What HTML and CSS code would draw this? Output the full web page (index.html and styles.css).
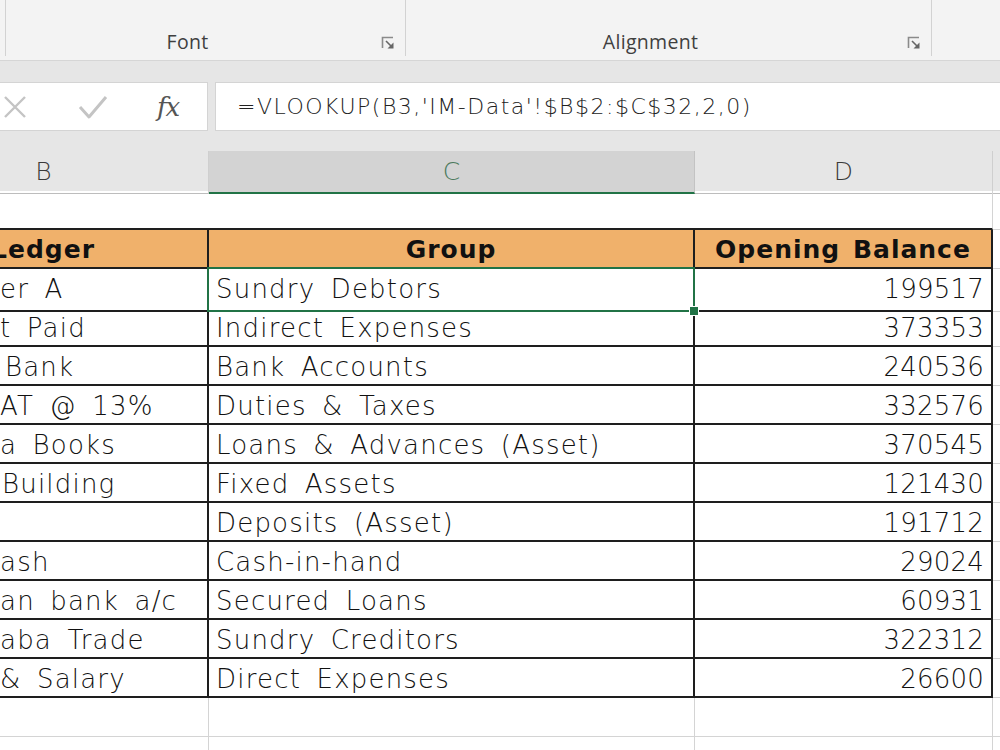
FILE: index.html
```html
<!DOCTYPE html>
<html>
<head>
<meta charset="utf-8">
<link rel="stylesheet" href="styles.css">
</head>
<body>
<div class="app">
  <div class="ribbon">
    <div class="grp grp-stub"></div>
    <div class="grp grp-font">
      <span class="grp-label">Font</span>
      <svg class="launcher" width="14" height="14" viewBox="0 0 14 14"><path d="M1.5 12V1.5H12" fill="none" stroke="#8a8a8a" stroke-width="1.6"/><path d="M5 5l5.5 5.5" stroke="#666" stroke-width="1.6"/><path d="M6.5 12.5h6v-6z" fill="#666"/></svg>
    </div>
    <div class="grp grp-align">
      <span class="grp-label">Alignment</span>
      <svg class="launcher" width="14" height="14" viewBox="0 0 14 14"><path d="M1.5 12V1.5H12" fill="none" stroke="#8a8a8a" stroke-width="1.6"/><path d="M5 5l5.5 5.5" stroke="#666" stroke-width="1.6"/><path d="M6.5 12.5h6v-6z" fill="#666"/></svg>
    </div>
    <div class="grp grp-rest"></div>
  </div>

  <div class="fbar">
    <div class="fbar-icons">
      <svg class="ic-x" width="26" height="26" viewBox="0 0 26 26"><path d="M3 3l20 20M23 3L3 23" stroke="#c4c4c4" stroke-width="2.4" fill="none"/></svg>
      <svg class="ic-check" width="30" height="26" viewBox="0 0 30 26"><path d="M2 13l9 10L28 3" stroke="#c4c4c4" stroke-width="3" fill="none" stroke-linejoin="round"/></svg>
      <span class="ic-fx">fx</span>
    </div>
    <div class="fbar-input">=VLOOKUP(B3,'IM-Data'!$B$2:$C$32,2,0)</div>
  </div>

  <div class="sheet">
    <div class="row colheads">
      <div class="ch">B</div>
      <div class="ch ch-sel">C</div>
      <div class="ch">D</div>
      <div class="ch ch-e"></div>
    </div>
    <div class="row r-title">
      <div class="c merged"></div>
      <div class="c blank"></div>
    </div>
    <div class="row r-head">
      <div class="c h">Ledger</div>
      <div class="c h">Group</div>
      <div class="c h">Opening Balance</div>
      <div class="c blank"></div>
    </div>
    <div class="row r-data">
      <div class="c ledger">er A</div>
      <div class="c grp-cell selected">Sundry Debtors</div>
      <div class="c num">199517</div>
      <div class="c blank"></div>
    </div>
    <div class="row r-data">
      <div class="c ledger">t Paid</div>
      <div class="c grp-cell">Indirect Expenses</div>
      <div class="c num">373353</div>
      <div class="c blank"></div>
    </div>
    <div class="row r-data">
      <div class="c ledger ind5">Bank</div>
      <div class="c grp-cell">Bank Accounts</div>
      <div class="c num">240536</div>
      <div class="c blank"></div>
    </div>
    <div class="row r-data">
      <div class="c ledger">AT @ 13%</div>
      <div class="c grp-cell">Duties &amp; Taxes</div>
      <div class="c num">332576</div>
      <div class="c blank"></div>
    </div>
    <div class="row r-data">
      <div class="c ledger">a Books</div>
      <div class="c grp-cell">Loans &amp; Advances (Asset)</div>
      <div class="c num">370545</div>
      <div class="c blank"></div>
    </div>
    <div class="row r-data">
      <div class="c ledger ind2">Building</div>
      <div class="c grp-cell">Fixed Assets</div>
      <div class="c num">121430</div>
      <div class="c blank"></div>
    </div>
    <div class="row r-data">
      <div class="c ledger"></div>
      <div class="c grp-cell">Deposits (Asset)</div>
      <div class="c num">191712</div>
      <div class="c blank"></div>
    </div>
    <div class="row r-data">
      <div class="c ledger">ash</div>
      <div class="c grp-cell">Cash-in-hand</div>
      <div class="c num">29024</div>
      <div class="c blank"></div>
    </div>
    <div class="row r-data">
      <div class="c ledger">an bank a/c</div>
      <div class="c grp-cell">Secured Loans</div>
      <div class="c num">60931</div>
      <div class="c blank"></div>
    </div>
    <div class="row r-data">
      <div class="c ledger">aba Trade</div>
      <div class="c grp-cell">Sundry Creditors</div>
      <div class="c num">322312</div>
      <div class="c blank"></div>
    </div>
    <div class="row r-data">
      <div class="c ledger">&amp; Salary</div>
      <div class="c grp-cell">Direct Expenses</div>
      <div class="c num">26600</div>
      <div class="c blank"></div>
    </div>
    <div class="row r-empty">
      <div class="c"></div><div class="c"></div><div class="c"></div><div class="c blank"></div>
    </div>
    <div class="row r-empty">
      <div class="c"></div><div class="c"></div><div class="c"></div><div class="c blank"></div>
    </div>
  </div>
</div>
</body>
</html>
```
FILE: styles.css
```css
* { box-sizing: border-box; }
html, body { margin: 0; padding: 0; }
body {
  width: 1000px;
  height: 750px;
  overflow: hidden;
  background: #ffffff;
  font-family: "DejaVu Sans", "Liberation Sans", sans-serif;
}
.app { width: 1000px; height: 750px; overflow: hidden; }

/* Ribbon */
.ribbon {
  height: 61px;
  background: #f3f3f3;
  border-bottom: 1px solid #d6d6d6;
  display: flex;
}
.grp {
  position: relative;
  height: 56px;
  border-right: 1px solid #d2d2d2;
  display: flex;
  align-items: flex-end;
  justify-content: center;
  padding-bottom: 1px;
}
.grp-stub { width: 6px; }
.grp-font { width: 400px; }
.grp-align { width: 526px; }
.grp-rest { flex: 1; border-right: none; }
.grp-label {
  font-family: "Open Sans", "Noto Sans", sans-serif;
  font-size: 19.5px;
  letter-spacing: 0.3px;
  color: #3f3f3f;
  line-height: 26px;
}
.grp-font .grp-label { margin-left: -36px; }
.grp-align .grp-label { margin-left: -36px; }
.launcher { position: absolute; right: 10px; bottom: 6px; }

/* Formula bar */
.fbar {
  background: #e6e6e6;
  padding: 21px 0 20px;
  display: flex;
  gap: 7px;
}
.fbar-icons {
  width: 208px;
  height: 49px;
  background: #fff;
  border: 1px solid #d4d4d4;
  border-left: none;
  display: flex;
  align-items: center;
  padding-left: 2px;
}
.ic-x { margin-right: 50px; }
.ic-check { margin-right: 47px; }
.ic-fx {
  font-family: "DejaVu Serif", "Liberation Serif", serif;
  font-style: italic;
  font-size: 26px;
  color: #555;
  letter-spacing: -1px;
  margin-left: 2px;
}
.fbar-input {
  flex: 1;
  height: 49px;
  background: #fff;
  border: 1px solid #d4d4d4;
  border-right: none;
  padding-left: 21px;
  font-family: "DejaVu Sans", sans-serif;
  font-weight: 200;
  font-size: 22px;
  letter-spacing: 1.5px;
  line-height: 47px;
  color: #222;
  white-space: nowrap;
}

/* Sheet */
.sheet {
  margin-left: -121px;
}
.row {
  display: grid;
  grid-template-columns: 330px 486px 298px 120px;
  height: 39px;
}
.colheads {
  background: #e6e6e6;
  height: 40px;
}
.ch {
  border-right: 1px solid #cfcfcf;
  border-bottom: 1px solid #bdbdbd;
  text-align: center;
  font-family: "DejaVu Sans", sans-serif;
  font-weight: 200;
  font-size: 25px;
  line-height: 41px;
  color: #3a3a3a;
}
.ch-sel {
  background: #d3d3d3;
  border-bottom: 2px solid #217346;
  color: #4c7a5c;
  border-right-color: #c3c3c3;
}
.ch-e { border-right: none; }

.c {
  border-right: 2px solid #1e1e1e;
  border-bottom: 2px solid #1e1e1e;
  font-family: "DejaVu Sans", sans-serif;
  font-weight: 200;
  font-size: 26px;
  letter-spacing: 1.2px;
  word-spacing: 6px;
  line-height: 41px;
  color: #111;
  white-space: nowrap;
  overflow: hidden;
  padding: 0 7px;
}
.r-title .merged {
  grid-column: 1 / span 3;
  border-right: 1px solid #d4d4d4;
  border-bottom: 2px solid #1e1e1e;
}
.c.blank {
  border-right: 1px solid #d4d4d4;
  border-bottom: 1px solid #d4d4d4;
}
.r-head .c.h {
  background: #f0b16b;
  font-weight: bold;
  text-align: center;
  font-size: 25px;
  letter-spacing: 1px;
  word-spacing: 3px;
  line-height: 40px;
}
.ledger { padding-left: 121px; }
.ledger.ind5 { padding-left: 126px; }
.ledger.ind2 { padding-left: 123px; }
.num { text-align: right; padding-right: 7px; letter-spacing: 0.2px; }
.r-empty .c {
  border-right: 1px solid #d4d4d4;
  border-bottom: 1px solid #d4d4d4;
}
.selected { position: relative; overflow: visible; }
.selected::after {
  content: "";
  position: absolute;
  left: -2px; top: -2px; right: -2px; bottom: -2px;
  border: 2px solid #217346;
}
.selected::before {
  content: "";
  position: absolute;
  right: -6px; bottom: -6px;
  width: 8px; height: 8px;
  background: #217346;
  border: 1px solid #fff;
  z-index: 2;
}
```
